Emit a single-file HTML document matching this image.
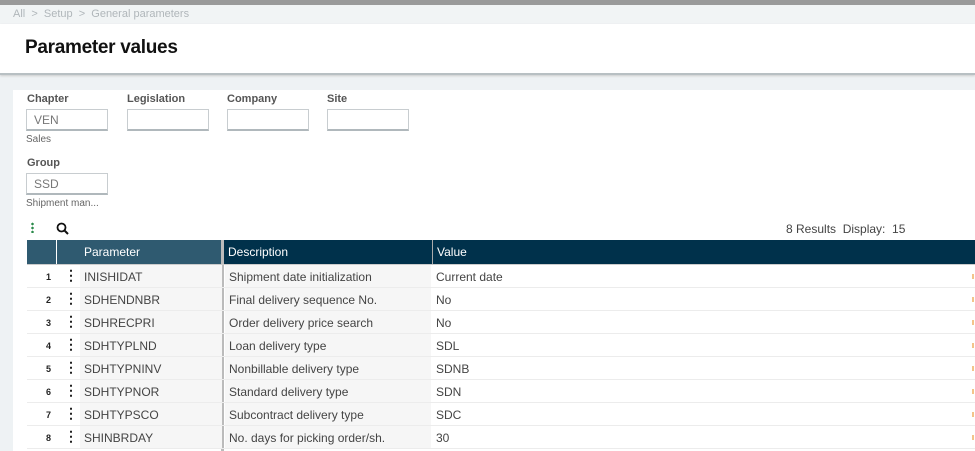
<!DOCTYPE html>
<html><head><meta charset="utf-8"><style>
*{margin:0;padding:0;box-sizing:border-box}
body{width:975px;height:451px;overflow:hidden;background:#eef2f4;font-family:"Liberation Sans",sans-serif;position:relative}
.a{position:absolute}
.top{left:0;top:0;width:975px;height:5px;background:#9a9a9a}
.bc{left:0;top:5px;width:975px;height:19px;background:#f1f4f5;font-size:11px;color:#b0b6ba;padding:3px 0 0 13px}
.title{left:0;top:24px;width:975px;height:51px;background:#fff;border-bottom:2px solid #b8c0c3;box-shadow:0 1px 2px #ccc}
.title h1{position:absolute;left:25px;top:13px;font-size:19px;font-weight:bold;color:#111;letter-spacing:-0.3px}
.panel{left:13px;top:90px;width:962px;height:361px;background:#fff}
.lbl{font-size:11px;font-weight:bold;color:#555}
.inp{width:82px;height:22px;border:1px solid #c8cdd0;border-bottom:2px solid #b0b8bc;font-size:12px;color:#777;padding:3px 0 0 7px}
.sub{font-size:10px;color:#666}
.hdr{top:240px;height:25px;color:#fff;font-size:12px;padding:5px 0 0 4px}
.row{left:27px;width:948px;height:23px;border-bottom:1px solid #ececec;font-size:12px;color:#444}
.row div{position:absolute;top:0;height:22px;padding-top:5px}
.n{left:0;width:30px;text-align:right;padding-right:6px;font-size:9px;font-weight:bold;color:#222;padding-top:7px!important}
.d{left:37px;width:6px;font-weight:bold;color:#222;font-size:14px;line-height:12px;padding-top:4px!important}
.p{left:53px;width:142px;padding-left:4px;background:#fbfbfb;background-image:radial-gradient(#e6e6e6 0.6px,transparent 0.7px);background-size:2px 2px}
.q{left:198px;width:206px;padding-left:4px;background:#fbfbfb;background-image:radial-gradient(#e6e6e6 0.6px,transparent 0.7px);background-size:2px 2px}
.v{left:409px;padding-left:0}
.o{left:945px;width:2px;height:5px!important;top:9px!important;background:#f3c48a;padding:0!important}
</style></head><body>
<div class="a top"></div>
<div class="a bc">All &nbsp;&gt;&nbsp; Setup &nbsp;&gt;&nbsp; General parameters</div>
<div class="a title"><h1>Parameter values</h1></div>
<div class="a panel"></div>
<div class="a lbl" style="left:27px;top:93px">Chapter</div>
<div class="a lbl" style="left:127px;top:93px">Legislation</div>
<div class="a lbl" style="left:227px;top:93px">Company</div>
<div class="a lbl" style="left:327px;top:93px">Site</div>
<div class="a inp" style="left:26px;top:109px">VEN</div>
<div class="a inp" style="left:127px;top:109px"></div>
<div class="a inp" style="left:227px;top:109px"></div>
<div class="a inp" style="left:327px;top:109px"></div>
<div class="a sub" style="left:26px;top:134px">Sales</div>
<div class="a lbl" style="left:27px;top:157px">Group</div>
<div class="a inp" style="left:26px;top:173px">SSD</div>
<div class="a sub" style="left:26px;top:198px">Shipment man...</div>
<div class="a" style="left:31px;top:222px;width:3px;height:11px;background:radial-gradient(circle,#2a8a4a 1.2px,transparent 1.4px);background-size:3px 4px"></div>
<svg class="a" style="left:56px;top:222px" width="13" height="13"><circle cx="5.5" cy="5.5" r="4" fill="none" stroke="#111" stroke-width="1.8"/><line x1="8.5" y1="8.5" x2="12" y2="12" stroke="#111" stroke-width="2"/></svg>
<div class="a" style="left:786px;top:222px;font-size:12px;color:#444">8 Results&nbsp; Display:&nbsp; 15</div>
<div class="a hdr" style="left:27px;width:29px;background:#2f5a70"></div>
<div class="a hdr" style="left:57px;width:23px;background:#2f5a70"></div>
<div class="a hdr" style="left:80px;width:141px;background:#2f5a70">Parameter</div>
<div class="a" style="left:221px;top:240px;width:3px;height:211px;background:#bbb"></div>
<div class="a hdr" style="left:224px;width:208px;background:#00314b">Description</div>
<div class="a hdr" style="left:432px;width:543px;background:#00314b;border-left:1px solid #aaa">Value</div>
<div class="a" style="left:27px;top:264px;width:948px;height:1px;background:#ccc"></div>
<div class="a row" style="top:265px"><div class="n">1</div><div class="d">⋮</div><div class="p">INISHIDAT</div><div class="q">Shipment date initialization</div><div class="v">Current date</div><div class="o"></div></div>
<div class="a row" style="top:288px"><div class="n">2</div><div class="d">⋮</div><div class="p">SDHENDNBR</div><div class="q">Final delivery sequence No.</div><div class="v">No</div><div class="o"></div></div>
<div class="a row" style="top:311px"><div class="n">3</div><div class="d">⋮</div><div class="p">SDHRECPRI</div><div class="q">Order delivery price search</div><div class="v">No</div><div class="o"></div></div>
<div class="a row" style="top:334px"><div class="n">4</div><div class="d">⋮</div><div class="p">SDHTYPLND</div><div class="q">Loan delivery type</div><div class="v">SDL</div><div class="o"></div></div>
<div class="a row" style="top:357px"><div class="n">5</div><div class="d">⋮</div><div class="p">SDHTYPNINV</div><div class="q">Nonbillable delivery type</div><div class="v">SDNB</div><div class="o"></div></div>
<div class="a row" style="top:380px"><div class="n">6</div><div class="d">⋮</div><div class="p">SDHTYPNOR</div><div class="q">Standard delivery type</div><div class="v">SDN</div><div class="o"></div></div>
<div class="a row" style="top:403px"><div class="n">7</div><div class="d">⋮</div><div class="p">SDHTYPSCO</div><div class="q">Subcontract delivery type</div><div class="v">SDC</div><div class="o"></div></div>
<div class="a row" style="top:426px"><div class="n">8</div><div class="d">⋮</div><div class="p">SHINBRDAY</div><div class="q">No. days for picking order/sh.</div><div class="v">30</div><div class="o"></div></div>
</body></html>
